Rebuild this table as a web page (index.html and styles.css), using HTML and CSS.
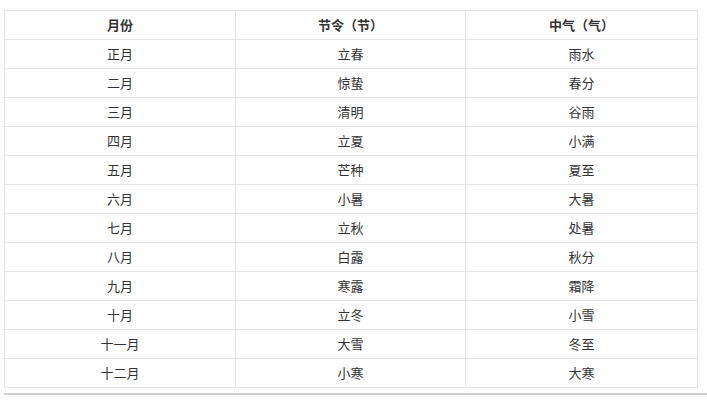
FILE: index.html
```html
<!DOCTYPE html>
<html lang="zh">
<head>
<meta charset="utf-8">
<link rel="stylesheet" href="styles.css">
</head>
<body>
<div class="wrap">
<table class="jieqi">
  <colgroup><col class="c1"><col class="c2"><col class="c3"></colgroup>
  <thead>
    <tr><th>月份</th><th>节令（节）</th><th>中气（气）</th></tr>
  </thead>
  <tbody>
    <tr><td>正月</td><td>立春</td><td>雨水</td></tr>
    <tr><td>二月</td><td>惊蛰</td><td>春分</td></tr>
    <tr><td>三月</td><td>清明</td><td>谷雨</td></tr>
    <tr><td>四月</td><td>立夏</td><td>小满</td></tr>
    <tr><td>五月</td><td>芒种</td><td>夏至</td></tr>
    <tr><td>六月</td><td>小暑</td><td>大暑</td></tr>
    <tr><td>七月</td><td>立秋</td><td>处暑</td></tr>
    <tr><td>八月</td><td>白露</td><td>秋分</td></tr>
    <tr><td>九月</td><td>寒露</td><td>霜降</td></tr>
    <tr><td>十月</td><td>立冬</td><td>小雪</td></tr>
    <tr><td>十一月</td><td>大雪</td><td>冬至</td></tr>
    <tr><td>十二月</td><td>小寒</td><td>大寒</td></tr>
  </tbody>
</table>
<div class="rule"></div>
</div>
</body>
</html>
```
FILE: styles.css
```css
html, body {
  margin: 0;
  padding: 0;
  background: #fff;
}
.wrap {
  padding: 10px 0 0 4px;
}
.jieqi {
  border-collapse: collapse;
  width: 693px;
  table-layout: fixed;
  font-family: "Noto Sans CJK SC", "Microsoft YaHei", sans-serif;
  font-size: 13px;
  color: #333;
}
.c1 { width: 231px; }
.c2 { width: 230px; }
.c3 { width: 232px; }
.jieqi th,
.jieqi td {
  border: 1px solid #e5e5e5;
  height: 28px;
  padding: 0;
  text-align: center;
  vertical-align: middle;
  line-height: 16px;
}
.jieqi th {
  font-weight: bold;
  color: #333;
  background: #fff;
}
.rule {
  height: 2px;
  background: #cfcfcf;
  margin-top: 5px;
}
```
